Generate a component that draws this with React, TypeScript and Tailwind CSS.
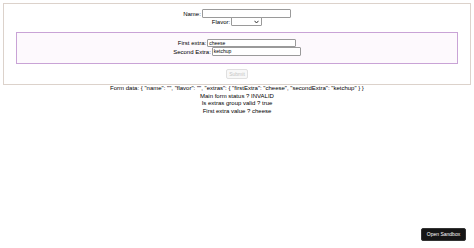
import React from "react";

export default function App() {
  const font = { fontFamily: '"Liberation Sans", Arial, sans-serif' };
  return (
    <div className="relative w-[474px] h-[248px] bg-white text-black" style={font}>
      <div className="ml-[3px] mr-[3px] pt-[3px]">
        <div className="h-[82px] border border-[#dcd2cb] flex flex-col items-center text-[6px] leading-[8px]">
          <div className="mt-[5px] h-[8px] flex items-start">
            <span className="mt-[1px] mr-[1px]">Name:</span>
            <input className="w-[89px] h-[9px] border border-[#9a9a9a] rounded-[1px] bg-white" />
          </div>
          <div className="h-[9px] flex items-center">
            <span className="mr-[1px]">Flavor:</span>
            <div className="w-[31px] h-[9px] border border-[#9a9a9a] rounded-[1px] bg-white flex items-center justify-end pr-[2px]">
              <svg width="5" height="4" viewBox="0 0 5 4"><path d="M0.5 0.8 L2.5 3 L4.5 0.8" stroke="#333" strokeWidth="1" fill="none" /></svg>
            </div>
          </div>
          <div className="self-stretch mx-[12px] mt-[6px] h-[32px] border border-[#c9a3d6] bg-[#fdf9fd] flex flex-col items-center">
            <div className="mt-[6px] h-[8px] flex items-center">
              <span className="mr-[1px]">First extra:</span>
              <div className="w-[89px] h-[8px] border border-[#9a9a9a] rounded-[1px] bg-white text-[5px] leading-[6px] pl-[1px]">cheese</div>
            </div>
            <div className="h-[9px] flex items-center">
              <span className="mr-[1px]">Second Extra:</span>
              <div className="w-[89px] h-[9px] border border-[#9a9a9a] rounded-[1px] bg-white text-[5px] leading-[7px] pl-[1px]">ketchup</div>
            </div>
          </div>
          <div className="mt-[5px] w-[22px] h-[10px] border border-[#e0e0e0] rounded-[2px] bg-[#f8f8f8] text-[#c4c4c4] text-[5px] leading-[8px] flex items-center justify-center">Submit</div>
        </div>
      </div>
      <div className="mt-0 flex flex-col items-center text-[6px] leading-[7.7px]">
        <div>Form data: {'{ "name": "", "flavor": "", "extras": { "firstExtra": "cheese", "secondExtra": "ketchup" } }'}</div>
        <div>Main form status ? INVALID</div>
        <div>Is extras group valid ? true</div>
        <div>First extra value ? cheese</div>
      </div>
      <div className="absolute left-[421px] top-[228px] w-[45px] h-[13px] bg-[#151515] rounded-[2px] border border-[#333] text-white text-[5px] leading-[11px] flex items-center justify-center">Open Sandbox</div>
    </div>
  );
}
